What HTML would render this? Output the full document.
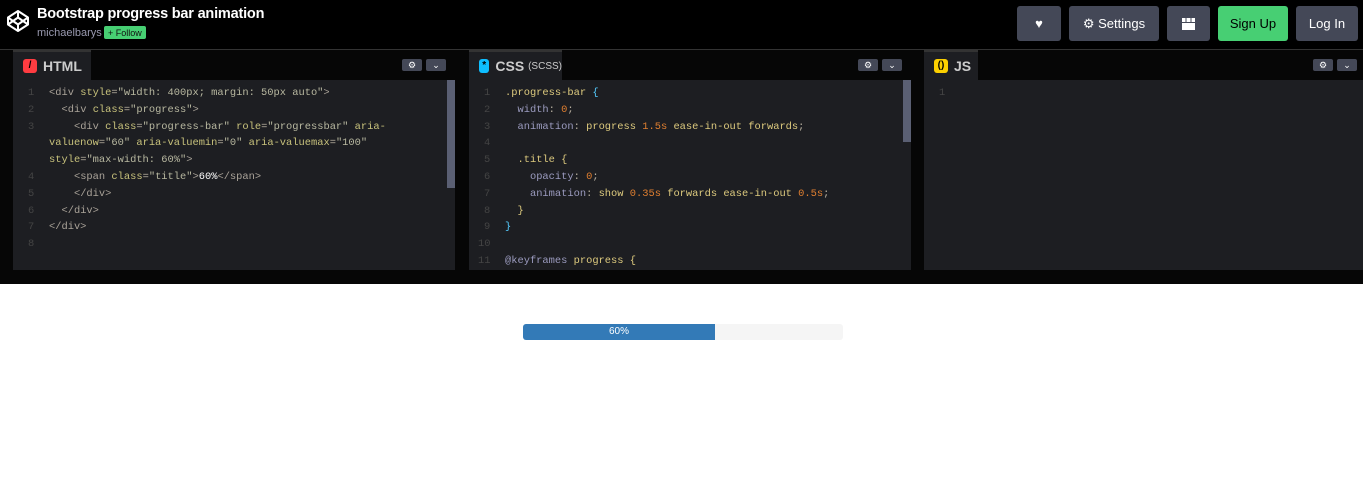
<!DOCTYPE html>
<html><head><style>
*{margin:0;padding:0;box-sizing:border-box}
body{width:1363px;height:501px;background:#fff;font-family:"Liberation Sans",sans-serif;overflow:hidden;position:relative}
.hdr{position:absolute;left:0;top:0;width:1363px;height:50px;background:#000;border-bottom:1px solid #333}
.title{position:absolute;left:37px;top:6px;color:#fff;font-weight:bold;font-size:14.5px;letter-spacing:-0.2px}
.user{position:absolute;left:37px;top:27px;color:#9a9ab0;font-size:11px}
.follow{position:absolute;left:104px;top:26px;background:#47cf73;color:#111;font-size:9px;padding:1px 4px;border-radius:2px;height:13px;line-height:12px}
.btn{position:absolute;top:6px;height:35px;background:#444857;border-radius:3px;color:#fff;font-size:13px;display:flex;align-items:center;justify-content:center}
.area{position:absolute;top:50px;left:0;width:1363px;height:234px;background:#060606}
.pane{position:absolute;top:0;height:220px;background:#1d1e22}
.tabbar{position:absolute;left:0;top:0;right:0;height:30px;background:#060606}
.tab{position:absolute;left:0;top:0;height:30px;background:#1d1e22;border-top:2px solid #333;color:#ccc;font-size:14px;font-weight:bold;display:flex;align-items:center;padding-left:10px}
.ico{width:14px;height:14px;border-radius:3px;margin-right:6px;display:inline-block;font-size:10px;color:#000;text-align:center;line-height:14px}
.sb{position:absolute;top:9px;width:20px;height:12px;background:#444857;border-radius:2px;color:#fff;font-size:9px;text-align:center;line-height:12px}
.code{position:absolute;left:0;top:35px;font-family:"Liberation Mono",monospace;font-size:10.4px;line-height:16.8px;color:#b8b0a0;white-space:pre}
.ln{display:inline-block;width:36px;color:#444;text-align:left;padding-left:15px}
.t{color:#aaa399}.a{color:#c8c27c}.s{color:#b8b8a0}.w{color:#fff}
.p{color:#9b9bbf}.n{color:#e07f30}.k{color:#ddca7e}.c{color:#ddca7e}
.scroll{position:absolute;width:8px;background:#5a5f73}
</style></head><body>
<div class="hdr">
<svg style="position:absolute;left:6px;top:9px" width="24" height="24" viewBox="0 0 24 24" fill="none" stroke="#fff" stroke-width="2" stroke-linejoin="round"><path d="M12 2L22 8.5V15.5L12 22L2 15.5V8.5Z M12 2V8.5 M12 15.5V22 M2 8.5L12 15.5L22 8.5 M2 15.5L12 8.5L22 15.5"/></svg>
<div class="title">Bootstrap progress bar animation</div>
<div class="user">michaelbarys</div>
<div class="follow">+ Follow</div>
<div class="btn" style="left:1017px;width:44px">♥</div>
<div class="btn" style="left:1069px;width:90px">⚙ Settings</div>
<div class="btn" style="left:1167px;width:43px"><svg width="13" height="12"><rect x="0" y="0" width="3.5" height="4" fill="#fff"/><rect x="4.5" y="0" width="4" height="4" fill="#fff"/><rect x="9.5" y="0" width="3.5" height="4" fill="#fff"/><rect x="0" y="5" width="13" height="7" fill="#fff"/></svg></div>
<div class="btn" style="left:1218px;width:70px;background:#47cf73;color:#000">Sign Up</div>
<div class="btn" style="left:1296px;width:62px">Log In</div>
</div>
<div class="area">
<div class="pane" style="left:13px;width:442px">
<div class="tabbar"></div>
<div class="tab" style="width:78px"><span class="ico" style="background:#ff3c41">/</span>HTML</div>
<div class="sb" style="left:389px">⚙</div><div class="sb" style="left:413px">⌄</div>
<div class="scroll" style="left:434px;top:30px;height:108px"></div>
<div class="code"><span class="ln">1</span><span class="t">&lt;div</span> <span class="a">style</span>=<span class="s">"width: 400px; margin: 50px auto"</span><span class="t">&gt;</span>
<span class="ln">2</span>  <span class="t">&lt;div</span> <span class="a">class</span>=<span class="s">"progress"</span><span class="t">&gt;</span>
<span class="ln">3</span>    <span class="t">&lt;div</span> <span class="a">class</span>=<span class="s">"progress-bar"</span> <span class="a">role</span>=<span class="s">"progressbar"</span> <span class="a">aria-</span>
<span class="ln"></span><span class="a">valuenow</span>=<span class="s">"60"</span> <span class="a">aria-valuemin</span>=<span class="s">"0"</span> <span class="a">aria-valuemax</span>=<span class="s">"100"</span>
<span class="ln"></span><span class="a">style</span>=<span class="s">"max-width: 60%"</span><span class="t">&gt;</span>
<span class="ln">4</span>    <span class="t">&lt;span</span> <span class="a">class</span>=<span class="s">"title"</span><span class="t">&gt;</span><span class="w">60%</span><span class="t">&lt;/span&gt;</span>
<span class="ln">5</span>    <span class="t">&lt;/div&gt;</span>
<span class="ln">6</span>  <span class="t">&lt;/div&gt;</span>
<span class="ln">7</span><span class="t">&lt;/div&gt;</span>
<span class="ln">8</span></div>
</div>
<div class="pane" style="left:469px;width:442px">
<div class="tabbar"></div>
<div class="tab" style="width:93px"><span class="ico" style="background:#0ebeff">*</span>CSS&nbsp;<span style="font-weight:normal;font-size:10px">(SCSS)</span></div>
<div class="sb" style="left:389px">⚙</div><div class="sb" style="left:413px">⌄</div>
<div class="scroll" style="left:434px;top:30px;height:62px"></div>
<div class="code"><span class="ln">1</span><span class="c">.progress-bar</span> <span style="color:#5cf">{</span>
<span class="ln">2</span>  <span class="p">width</span>: <span class="n">0</span>;
<span class="ln">3</span>  <span class="p">animation</span>: <span class="k">progress</span> <span class="n">1.5s</span> <span class="k">ease-in-out forwards</span>;
<span class="ln">4</span>
<span class="ln">5</span>  <span class="c">.title</span> <span class="k">{</span>
<span class="ln">6</span>    <span class="p">opacity</span>: <span class="n">0</span>;
<span class="ln">7</span>    <span class="p">animation</span>: <span class="k">show</span> <span class="n">0.35s</span> <span class="k">forwards ease-in-out</span> <span class="n">0.5s</span>;
<span class="ln">8</span>  <span class="k">}</span>
<span class="ln">9</span><span style="color:#5cf">}</span>
<span class="ln" style="padding-left:9px">10</span>
<span class="ln" style="padding-left:9px">11</span><span class="p">@keyframes</span> <span class="k">progress</span> <span class="k">{</span></div>
</div>
<div class="pane" style="left:924px;width:439px">
<div class="tabbar"></div>
<div class="tab" style="width:54px"><span class="ico" style="background:#fcd000">()</span>JS</div>
<div class="sb" style="left:389px">⚙</div><div class="sb" style="left:413px">⌄</div>
<div class="code"><span class="ln">1</span></div>
</div>
</div>
<div style="position:absolute;left:523px;top:324px;width:320px;height:16px;background:#f5f5f5;border-radius:3px;overflow:hidden"><div style="width:192px;height:16px;background:#337ab7;color:#fff;font-size:10px;text-align:center;line-height:16px">60%</div></div>
</body></html>
